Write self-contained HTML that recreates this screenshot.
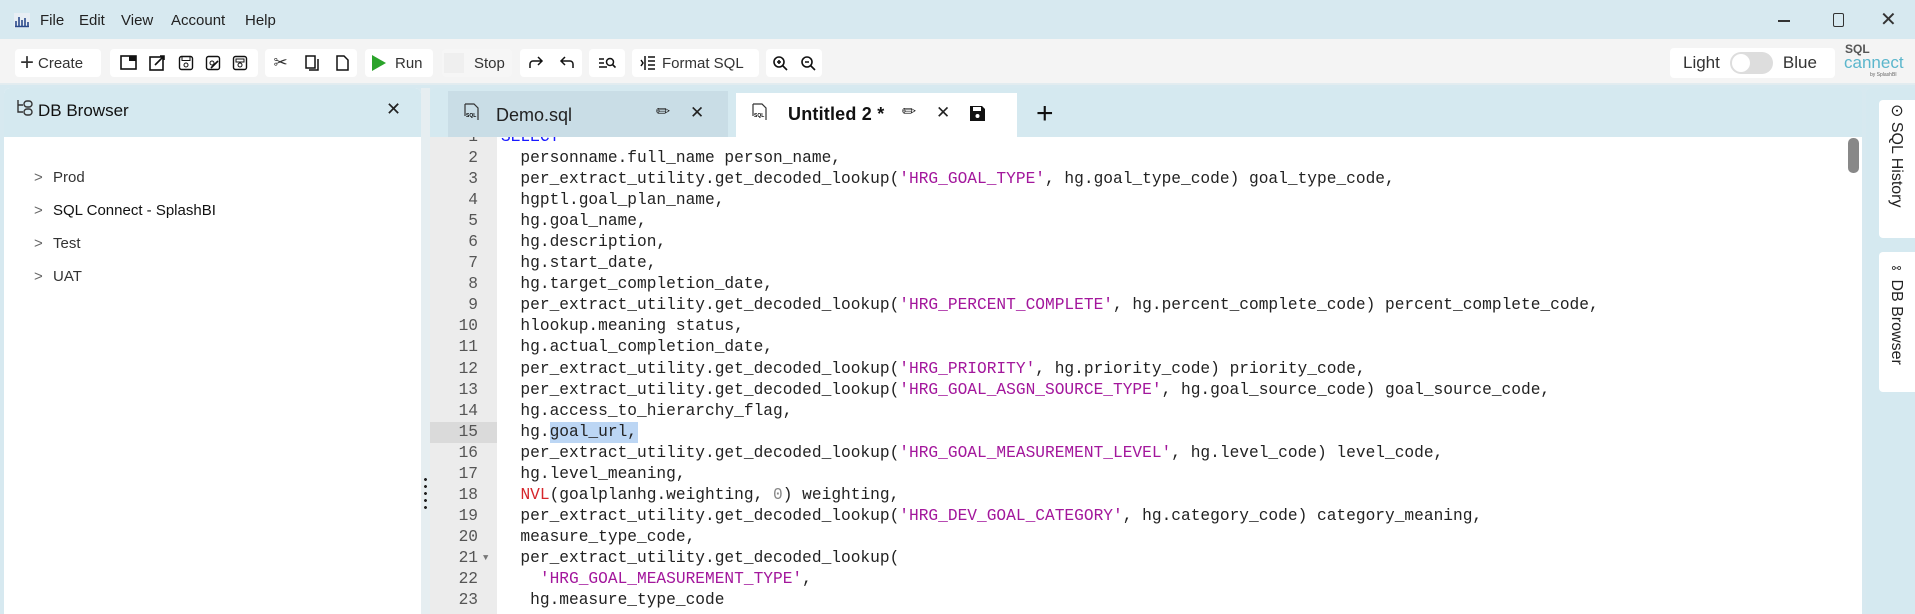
<!DOCTYPE html>
<html><head><meta charset="utf-8">
<style>
*{box-sizing:border-box;margin:0;padding:0}
body{width:1915px;height:614px;overflow:hidden;background:#d7e9f0;font-family:"Liberation Sans",sans-serif;color:#222;position:relative}
.abs{position:absolute}
.menu span{position:absolute;top:12px;font-size:15px;color:#222}
.tb{position:absolute;top:39px;left:0;width:1915px;height:46px;background:#f4f4f4;border-bottom:2px solid #e2ecf0}
.btn{position:absolute;top:10px;height:28px;background:#fff;border-radius:4px;display:flex;align-items:center;font-size:15px;color:#333}
.code{position:absolute;left:430px;top:137px;width:1432px;height:477px;background:#fff;overflow:hidden}
.gut{position:absolute;left:0;top:0;width:67px;height:477px;background:#ececec}
.lines{position:absolute;left:0;top:-10px;width:1400px;font-family:"Liberation Mono",monospace;font-size:16.2px;line-height:21.05px;white-space:normal}
.ln{display:block;position:relative;height:21.05px}
.ln b{font-weight:normal;position:absolute;left:0;width:48px;text-align:right;color:#555}
.ln i{font-style:normal;position:absolute;left:71px;color:#222;white-space:pre}
.s{color:#a3179c}.k{color:#1a1aff}.r{color:#d6262b}.n{color:#888}
</style></head><body>
<div class="menu">
<svg class="abs" style="left:14px;top:13px" width="16" height="15" viewBox="0 0 16 15"><rect x="0" y="0" width="16" height="15" fill="#e8eef4"/><path d="M2 13V8M5 13V4M8 13V7M11 13V5M14 13V9M1 13.5H15" stroke="#2a4a8a" stroke-width="1.6"/></svg>
<span style="left:40px">File</span><span style="left:79px">Edit</span><span style="left:121px">View</span><span style="left:171px">Account</span><span style="left:245px">Help</span>
</div>
<div class="abs" style="left:1778px;top:20px;width:12px;height:1.5px;background:#333"></div>
<div class="abs" style="left:1833px;top:13px;width:11px;height:14px;border:1.5px solid #333;border-radius:2px"></div>
<div class="abs" style="left:1880px;top:7px;font-size:20px;color:#333">✕</div>
<div class="tb">
<div class="btn" style="left:15px;width:86px"><span style="font-size:24px;margin:0 4px 0 5px;line-height:1">+</span>Create</div>
<div class="btn" style="left:110px;width:148px;justify-content:space-around;padding:0 4px">
<svg width="18" height="16"><rect x="1" y="1" width="15" height="13" fill="none" stroke="#111" stroke-width="1.6"/><rect x="9" y="1" width="7" height="5" fill="#111"/></svg>
<svg width="18" height="16"><rect x="1" y="2" width="13" height="13" fill="none" stroke="#111" stroke-width="1.6"/><path d="M6 10L15 1M11 1h4v4" stroke="#111" stroke-width="1.6" fill="none"/></svg>
<svg width="16" height="16"><rect x="1.5" y="1.5" width="13" height="13" rx="2" fill="none" stroke="#111" stroke-width="1.4"/><rect x="4" y="1.5" width="8" height="4" fill="none" stroke="#111"/><circle cx="8" cy="10" r="2" fill="none" stroke="#111"/></svg>
<svg width="16" height="16"><rect x="1.5" y="1.5" width="13" height="13" rx="2" fill="none" stroke="#111" stroke-width="1.4"/><path d="M6 13l7-7" stroke="#111" stroke-width="1.6"/><circle cx="7" cy="8" r="2" fill="none" stroke="#111"/></svg>
<svg width="16" height="16"><rect x="1.5" y="1.5" width="13" height="13" rx="2" fill="none" stroke="#111" stroke-width="1.4"/><rect x="4" y="4" width="8" height="3" fill="none" stroke="#111"/><circle cx="8" cy="10" r="2" fill="none" stroke="#111"/></svg>
</div>
<div class="btn" style="left:265px;width:92px;justify-content:space-around;font-size:17px"><span>✂</span>
<svg width="14" height="16"><rect x="1" y="1" width="9" height="12" fill="none" stroke="#111" stroke-width="1.5"/><path d="M4 15h9V4" stroke="#111" stroke-width="1.5" fill="none"/></svg>
<svg width="13" height="16"><path d="M1 1h7l4 4v10H1z" fill="none" stroke="#111" stroke-width="1.5"/></svg></div>
<div class="btn" style="left:365px;width:68px"><svg style="margin:0 8px 0 6px" width="16" height="18"><path d="M1 1L15 9L1 17Z" fill="#2aa32a"/></svg>Run</div>
<div class="btn" style="left:442px;width:70px;background:#f6f6f6"><span style="display:inline-block;width:20px;height:20px;background:#efefef;margin:0 10px 0 2px"></span>Stop</div>
<div class="btn" style="left:520px;width:62px;justify-content:space-around">
<svg width="16" height="14"><path d="M2 12V8a3 3 0 0 1 3-3h8M10 1l4 4-4 4" fill="none" stroke="#111" stroke-width="1.5"/></svg>
<svg width="16" height="14"><path d="M14 12V8a3 3 0 0 0-3-3H3M6 1L2 5l4 4" fill="none" stroke="#111" stroke-width="1.5"/></svg></div>
<div class="btn" style="left:589px;width:36px;justify-content:center"><svg width="18" height="14"><path d="M1 3h5M1 7h5M1 11h8" stroke="#111" stroke-width="1.5"/><circle cx="12" cy="6" r="3.5" fill="none" stroke="#111" stroke-width="1.5"/><path d="M14.5 8.5l3 3" stroke="#111" stroke-width="1.6"/></svg></div>
<div class="btn" style="left:632px;width:127px"><svg style="margin:0 6px 0 8px" width="16" height="16"><path d="M5 1v14M8 2h7M8 6h7M8 10h7M8 14h7M1 5l2 3-2 3" stroke="#111" stroke-width="1.5" fill="none"/></svg>Format SQL</div>
<div class="btn" style="left:766px;width:56px;justify-content:space-around">
<svg width="16" height="16"><circle cx="7" cy="7" r="5" fill="none" stroke="#111" stroke-width="1.6"/><path d="M11 11l4 4M5 7h4M7 5v4" stroke="#111" stroke-width="1.6"/></svg>
<svg width="16" height="16"><circle cx="7" cy="7" r="5" fill="none" stroke="#111" stroke-width="1.6"/><path d="M11 11l4 4M5 7h4" stroke="#111" stroke-width="1.6"/></svg></div>
<div class="btn" style="left:1670px;width:165px;top:9px;height:30px;font-size:17px"><span style="margin-left:13px">Light</span><span style="display:inline-block;width:43px;height:22px;border-radius:11px;background:#ddd;margin:0 10px;position:relative"><span style="position:absolute;left:2px;top:2px;width:18px;height:18px;border-radius:50%;background:#fff"></span></span>Blue</div>
<div class="abs" style="left:1845px;top:5px;font-size:12px;color:#555;line-height:11px;font-weight:bold">SQL</div>
<div class="abs" style="left:1844px;top:14px;font-size:17px;color:#5bb6cc">cannect</div>
<div class="abs" style="left:1870px;top:33px;font-size:5px;color:#666">by SplashBI</div>
</div>
<div class="abs" style="left:4px;top:88px;width:417px;height:526px;background:#fff;border-radius:6px 6px 0 0;overflow:hidden">
<div style="height:49px;background:#d5e9f0;position:relative">
<svg class="abs" style="left:12px;top:11px" width="18" height="18"><path d="M2 1v12h5M2 6h5" stroke="#333" stroke-width="1.4" fill="none"/><rect x="8" y="2" width="8" height="6" rx="3" fill="none" stroke="#333" stroke-width="1.4"/><rect x="8" y="10" width="8" height="6" rx="3" fill="none" stroke="#333" stroke-width="1.4"/></svg>
<span class="abs" style="left:34px;top:13px;font-size:17px;color:#111">DB Browser</span>
<span class="abs" style="left:382px;top:11px;font-size:18px;color:#222">✕</span>
</div>
<div style="position:relative;font-size:15px;color:#333">
<span class="abs" style="left:30px;top:32px;color:#666">&gt;</span><span class="abs" style="left:49px;top:32px">Prod</span>
<span class="abs" style="left:30px;top:65px;color:#666">&gt;</span><span class="abs" style="left:49px;top:65px;color:#111">SQL Connect - SplashBI</span>
<span class="abs" style="left:30px;top:98px;color:#666">&gt;</span><span class="abs" style="left:49px;top:98px">Test</span>
<span class="abs" style="left:30px;top:131px;color:#666">&gt;</span><span class="abs" style="left:49px;top:131px">UAT</span>
</div></div>
<div class="abs" style="left:421px;top:88px;width:9px;height:526px;background:#e6eef1"></div>
<div class="abs" style="left:424px;top:476px;width:3px;height:34px;background:radial-gradient(circle,#222 1.3px,transparent 1.6px) 0 0/3px 7px"></div>
<div class="abs" style="left:430px;top:88px;width:1432px;height:49px;background:#d5e9f0;border-radius:6px 6px 0 0"></div>
<div class="abs" style="left:448px;top:91px;width:280px;height:46px;background:#c9dde6"></div>
<div class="abs" style="left:736px;top:93px;width:281px;height:44px;background:#fff"></div>
<svg class="abs" style="left:464px;top:103px" width="16" height="18"><path d="M1 1h9l4 4v12" fill="none" stroke="#333" stroke-width="1.2"/><path d="M1 1v12" stroke="#333" stroke-width="1.2"/><text x="2" y="14" font-size="5" font-family="Liberation Sans" font-weight="bold">SQL</text></svg>
<span class="abs" style="left:496px;top:105px;font-size:18px;color:#222">Demo.sql</span>
<span class="abs" style="left:656px;top:102px;font-size:17px">✏</span><span class="abs" style="left:690px;top:103px;font-size:17px">✕</span>
<svg class="abs" style="left:752px;top:103px" width="16" height="18"><path d="M1 1h9l4 4v12" fill="none" stroke="#333" stroke-width="1.2"/><path d="M1 1v12" stroke="#333" stroke-width="1.2"/><text x="2" y="14" font-size="5" font-family="Liberation Sans" font-weight="bold">SQL</text></svg>
<span class="abs" style="left:788px;top:104px;font-size:18px;color:#111;font-weight:bold;letter-spacing:0.2px">Untitled 2 *</span>
<span class="abs" style="left:902px;top:102px;font-size:17px">✏</span><span class="abs" style="left:936px;top:103px;font-size:17px">✕</span>
<svg class="abs" style="left:970px;top:106px" width="15" height="15"><path d="M0 0h12l3 3v12H0z" fill="#111"/><rect x="3" y="1" width="8" height="4" fill="#fff"/><circle cx="7.5" cy="10" r="2" fill="#fff"/></svg>
<span class="abs" style="left:1036px;top:99px;font-size:30px;line-height:1;color:#111">+</span>
<div class="code"><div class="gut"></div>
<div class="abs" style="left:0;top:285px;width:67px;height:21px;background:#dadada"></div>
<div class="abs" style="left:120px;top:285px;width:88px;height:21px;background:#bcd6f4"></div>
<div class="lines"><span class="ln"><b>1</b><i><span class="k">SELECT</span></i></span><span class="ln"><b>2</b><i>  personname.full_name person_name,</i></span><span class="ln"><b>3</b><i>  per_extract_utility.get_decoded_lookup(<span class="s">'HRG_GOAL_TYPE'</span>, hg.goal_type_code) goal_type_code,</i></span><span class="ln"><b>4</b><i>  hgptl.goal_plan_name,</i></span><span class="ln"><b>5</b><i>  hg.goal_name,</i></span><span class="ln"><b>6</b><i>  hg.description,</i></span><span class="ln"><b>7</b><i>  hg.start_date,</i></span><span class="ln"><b>8</b><i>  hg.target_completion_date,</i></span><span class="ln"><b>9</b><i>  per_extract_utility.get_decoded_lookup(<span class="s">'HRG_PERCENT_COMPLETE'</span>, hg.percent_complete_code) percent_complete_code,</i></span><span class="ln"><b>10</b><i>  hlookup.meaning status,</i></span><span class="ln"><b>11</b><i>  hg.actual_completion_date,</i></span><span class="ln"><b>12</b><i>  per_extract_utility.get_decoded_lookup(<span class="s">'HRG_PRIORITY'</span>, hg.priority_code) priority_code,</i></span><span class="ln"><b>13</b><i>  per_extract_utility.get_decoded_lookup(<span class="s">'HRG_GOAL_ASGN_SOURCE_TYPE'</span>, hg.goal_source_code) goal_source_code,</i></span><span class="ln"><b>14</b><i>  hg.access_to_hierarchy_flag,</i></span><span class="ln"><b>15</b><i>  hg.goal_url,</i></span><span class="ln"><b>16</b><i>  per_extract_utility.get_decoded_lookup(<span class="s">'HRG_GOAL_MEASUREMENT_LEVEL'</span>, hg.level_code) level_code,</i></span><span class="ln"><b>17</b><i>  hg.level_meaning,</i></span><span class="ln"><b>18</b><i>  <span class="r">NVL</span>(goalplanhg.weighting, <span class="n">0</span>) weighting,</i></span><span class="ln"><b>19</b><i>  per_extract_utility.get_decoded_lookup(<span class="s">'HRG_DEV_GOAL_CATEGORY'</span>, hg.category_code) category_meaning,</i></span><span class="ln"><b>20</b><i>  measure_type_code,</i></span><span class="ln"><b>21</b><span class="abs" style="left:53px;top:0;font-size:9px;color:#777">▼</span><i>  per_extract_utility.get_decoded_lookup(</i></span><span class="ln"><b>22</b><i>    <span class="s">'HRG_GOAL_MEASUREMENT_TYPE'</span>,</i></span><span class="ln"><b>23</b><i>   hg.measure_type_code</i></span></div>
<div class="abs" style="left:1418px;top:1px;width:11px;height:35px;border-radius:5px;background:#888"></div>
</div>
<div class="abs" style="left:1866px;top:88px;width:49px;height:526px;background:#d5e9f0;border-radius:6px 0 0 0"></div>
<div class="abs" style="left:1879px;top:100px;width:36px;height:138px;background:#fff;border-radius:4px 0 0 4px"></div>
<div class="abs" style="left:1879px;top:252px;width:36px;height:140px;background:#fff;border-radius:4px 0 0 4px"></div>
<div class="abs" style="left:1887px;top:104px;writing-mode:vertical-rl;font-size:16px;color:#222">⊙ SQL History</div>
<div class="abs" style="left:1887px;top:262px;writing-mode:vertical-rl;font-size:16px;color:#222"><span style="font-size:11px">⚯</span> DB Browser</div>
</body></html>
